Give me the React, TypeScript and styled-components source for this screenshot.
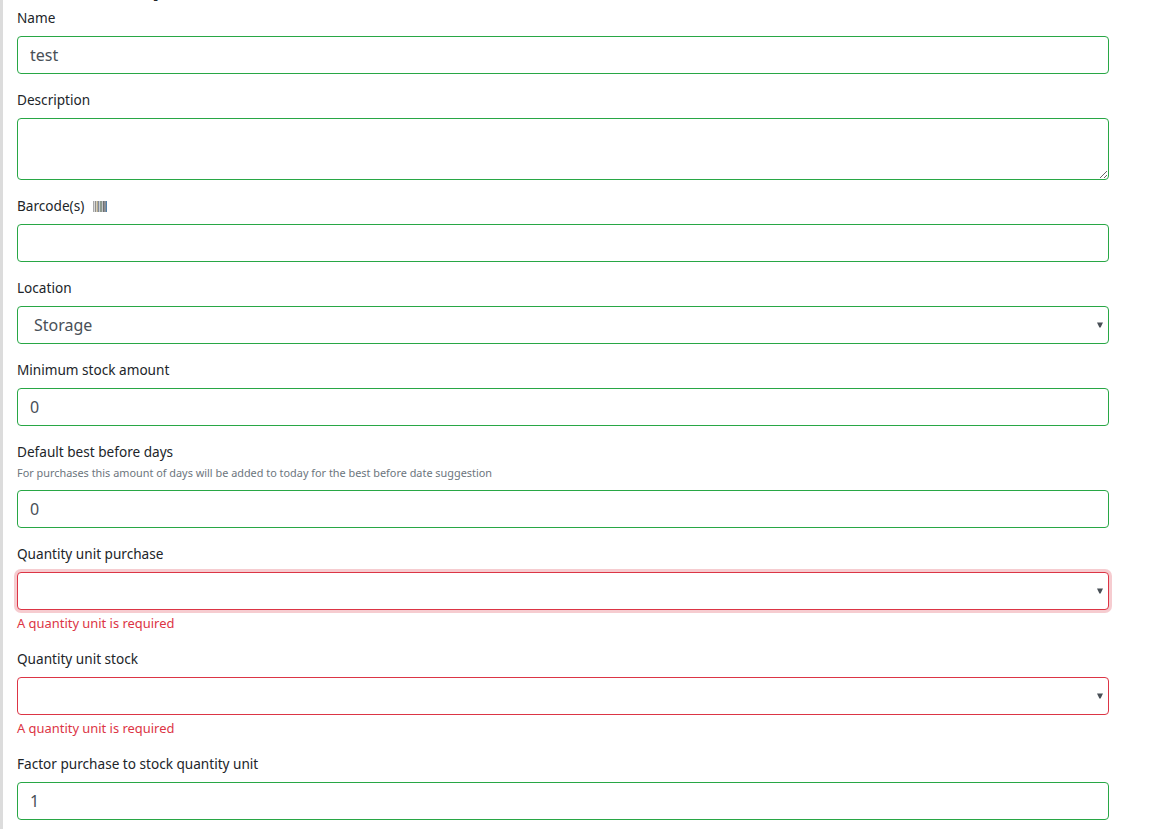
import React from "react";
import styled, { createGlobalStyle } from "styled-components";

const Global = createGlobalStyle`
  html, body { margin: 0; padding: 0; height: 829px; overflow: hidden; background: #fff; }
  body { font-family: "Noto Sans", sans-serif; font-size: 13.6px; color: #212529; }
`;

const Page = styled.div`
  height: 829px;
  overflow: hidden;
  border-left: 3px solid #dcdcdc;
  padding: 0 65px 0 14px;
  box-sizing: border-box;
`;

const Heading = styled.h1`
  margin: -48px 0 8px;
  font-size: 40px;
  font-weight: 400;
  line-height: 48px;
  color: #212529;
`;

const Group = styled.div`
  margin-bottom: 16px;
`;

const Label = styled.label`
  display: flex;
  align-items: center;
  gap: 9px;
  font-size: 13.6px;
  line-height: 20px;
  margin-bottom: 8px;
  color: #212529;
`;

const Hint = styled.div`
  font-size: 10.88px;
  line-height: 16px;
  margin: -5px 0 9px;
  color: #6c757d;
`;

const fieldCss = `
  display: block;
  width: 100%;
  box-sizing: border-box;
  height: 38px;
  padding: 6px 12px;
  font-family: "Noto Sans", sans-serif;
  font-size: 16px;
  line-height: 24px;
  color: #495057;
  background: #fff;
  border-radius: 4px;
  outline: none;
`;

const Input = styled.input`
  ${fieldCss}
  border: 1px solid #28a745;
`;

const TextArea = styled.textarea`
  ${fieldCss}
  height: 62px;
  border: 1px solid #28a745;
`;

const SelectWrap = styled.div`
  position: relative;
`;

const Select = styled.select<{ $invalid?: boolean; $focused?: boolean }>`
  ${fieldCss}
  appearance: none;
  padding-left: 16px;
  border: 1px solid ${(p) => (p.$invalid ? "#dc3545" : "#28a745")};
  box-shadow: ${(p) => (p.$focused ? "0 0 0 3px rgba(220,53,69,.25)" : "none")};
`;

const Arrow = styled.svg`
  position: absolute;
  right: 6px;
  top: 16px;
  width: 6px;
  height: 6px;
  pointer-events: none;
  fill: #495057;
`;

const Error = styled.div`
  font-size: 12.92px;
  line-height: 19px;
  margin-top: 4px;
  color: #dc3545;
`;

const BARS: [number, number, string][] = [
  [0, 1, "#a9a9a9"],
  [1, 1, "#d9d9d9"],
  [2, 1, "#8f8f8f"],
  [3, 1, "#d5d0c0"],
  [4, 1, "#b6a98a"],
  [5, 1, "#7f8a9c"],
  [6, 1, "#c9cdd2"],
  [7, 2, "#8d9a8e"],
  [9, 1, "#c4c6c8"],
  [10, 1, "#6f6f6f"],
  [11, 2, "#8b8f95"],
  [13, 1, "#4f7fa8"],
];

const BarcodeIcon = () => (
  <svg width="15" height="11" viewBox="0 0 15 11" aria-hidden="true">
    {BARS.map(([x, w, c]) => (
      <rect key={x} x={x} y="0" width={w} height="11" fill={c} />
    ))}
  </svg>
);

const Dropdown = ({ value, invalid, focused }: { value: string; invalid?: boolean; focused?: boolean }) => (
  <SelectWrap>
    <Select $invalid={invalid} $focused={focused} defaultValue={value}>
      <option value={value}>{value}</option>
    </Select>
    <Arrow viewBox="0 0 6 6" aria-hidden="true">
      <path d="M0 0.5H6L3.6 5.5H2.4Z" />
    </Arrow>
  </SelectWrap>
);

export default function App() {
  return (
    <Page>
      <Global />
      <Heading>Create product</Heading>
      <Group>
        <Label>Name</Label>
        <Input defaultValue="test" />
      </Group>
      <Group>
        <Label>Description</Label>
        <TextArea />
      </Group>
      <Group>
        <Label>
          Barcode(s) <BarcodeIcon />
        </Label>
        <Input />
      </Group>
      <Group>
        <Label>Location</Label>
        <Dropdown value="Storage" />
      </Group>
      <Group>
        <Label>Minimum stock amount</Label>
        <Input defaultValue="0" />
      </Group>
      <Group>
        <Label>Default best before days</Label>
        <Hint>For purchases this amount of days will be added to today for the best before date suggestion</Hint>
        <Input defaultValue="0" />
      </Group>
      <Group>
        <Label>Quantity unit purchase</Label>
        <Dropdown value="" invalid focused />
        <Error>A quantity unit is required</Error>
      </Group>
      <Group>
        <Label>Quantity unit stock</Label>
        <Dropdown value="" invalid />
        <Error>A quantity unit is required</Error>
      </Group>
      <Group>
        <Label>Factor purchase to stock quantity unit</Label>
        <Input defaultValue="1" />
      </Group>
    </Page>
  );
}
